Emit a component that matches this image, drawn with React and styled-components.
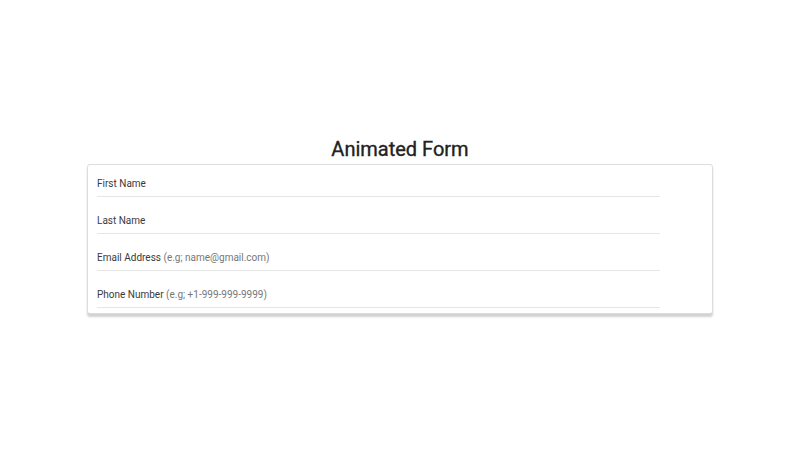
import React from 'react'
import styled, { createGlobalStyle } from 'styled-components'

const GlobalStyle = createGlobalStyle`
  html, body {
    margin: 0;
    padding: 0;
    background: #fff;
    font-family: Roboto, "Liberation Sans", sans-serif;
  }
`

const fields = [
  { id: 'first', label: 'First Name' },
  { id: 'last', label: 'Last Name' },
  { id: 'email', label: 'Email Address', hint: '(e.g; name@gmail.com)' },
  { id: 'phone', label: 'Phone Number', hint: '(e.g; +1-999-999-9999)' }
]

const App = () => (
  <Page>
    <GlobalStyle />
    <Title>Animated Form</Title>
    <Card>
      {fields.map(f => (
        <Field key={f.id}>
          <Input id={f.id} type='text' />
          <Label htmlFor={f.id}>
            {f.label}
            {f.hint && <Hint> {f.hint}</Hint>}
          </Label>
        </Field>
      ))}
    </Card>
  </Page>
)

const Page = styled.main`
  height: 100vh;
  display: flex;
  flex-direction: column;
  align-items: center;
  justify-content: center;
`
const Title = styled.h1`
  margin: 0 0 3px;
  font-size: 20px;
  line-height: 24px;
  font-weight: 400;
  color: #222;
  -webkit-text-stroke: 0.35px #222;
`
const Card = styled.form`
  box-sizing: border-box;
  width: 626px;
  padding: 0 0 5px 9px;
  border: 1px solid #ddd;
  border-radius: 3px;
  background: #fff;
  box-shadow: 0 3px 2px rgba(0, 0, 0, 0.18);
`
const Field = styled.div`
  position: relative;
  width: 563px;
  margin-top: 11px;
  &:first-child {
    margin-top: 6px;
  }
`
const Input = styled.input`
  display: block;
  box-sizing: border-box;
  width: 100%;
  height: 26px;
  padding: 0;
  border: none;
  border-bottom: 1px solid #e6e6e6;
  background: transparent;
  font: inherit;
  outline: none;
`
const Label = styled.label`
  position: absolute;
  left: 0;
  top: 0;
  line-height: 25px;
  font-size: 10px;
  color: #3a3a3a;
  pointer-events: none;
`
const Hint = styled.span`
  color: #777;
`

export default App
